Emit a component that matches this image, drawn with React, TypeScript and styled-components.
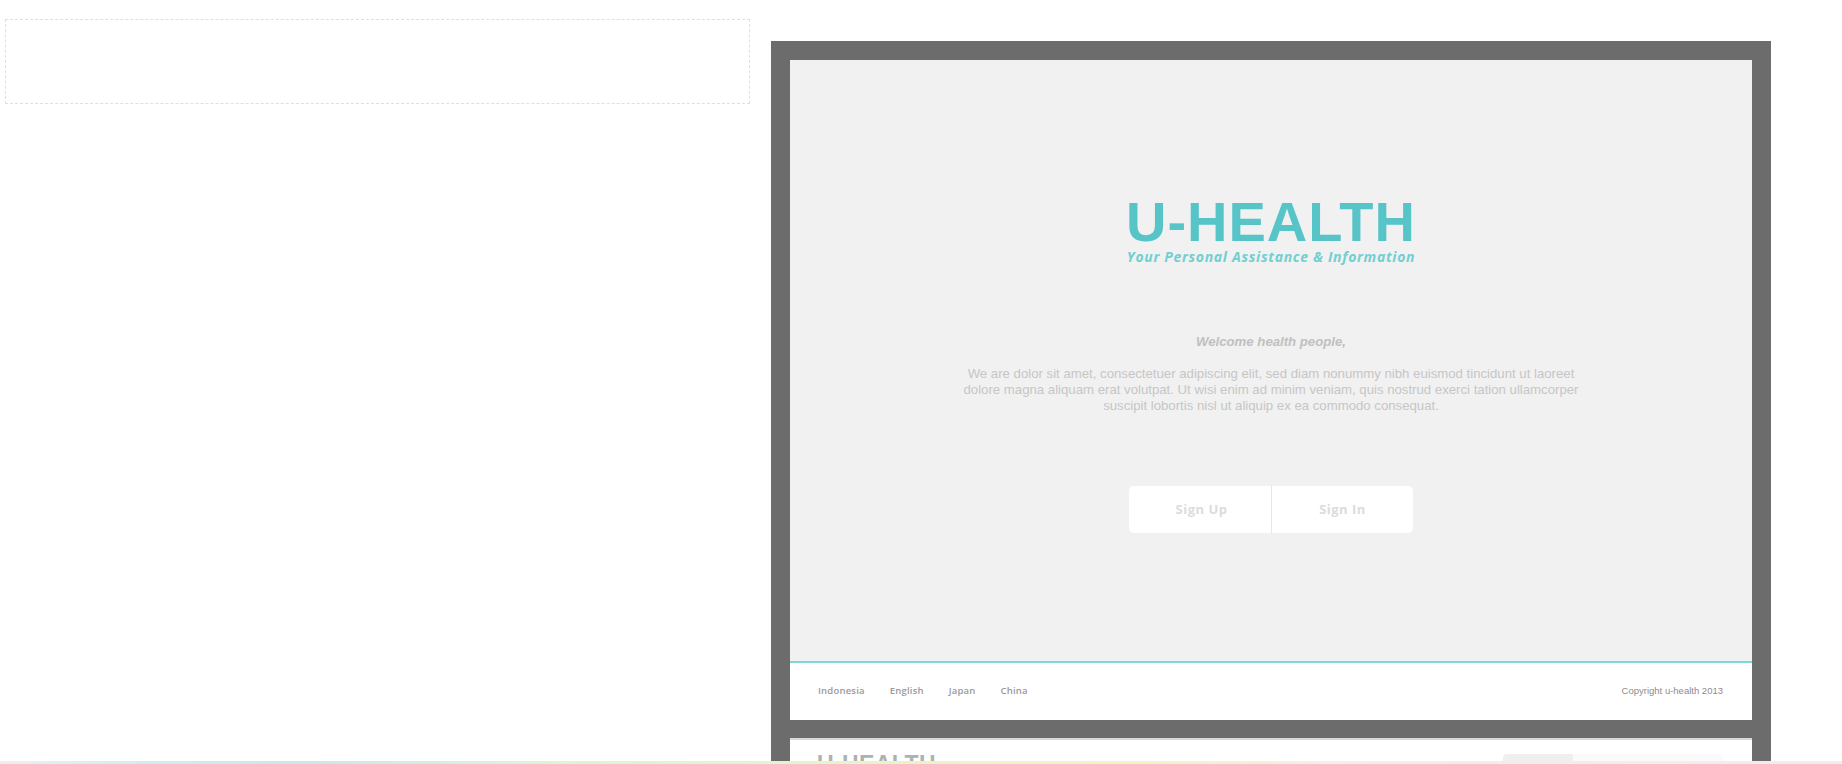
import styled, { createGlobalStyle } from "styled-components";

const Global = createGlobalStyle`
  html, body {
    margin: 0;
    height: 100%;
    background: #fff;
    overflow: hidden;
  }
`;

const Page = styled.div`
  height: 764px;
  display: flex;
  align-items: flex-start;
  padding-left: 5px;
  overflow: hidden;
  position: relative;
  font-family: "Liberation Sans", Arial, sans-serif;
`;

const AdSlot = styled.div`
  flex: 0 0 745px;
  height: 85px;
  margin-top: 19px;
  box-sizing: border-box;
  border: 1px dashed #dde0e0;
`;

const Frame = styled.div`
  flex: 0 0 1000px;
  margin: 41px 0 0 21px;
  box-sizing: border-box;
  padding: 19px 19px 0;
  background: #6c6c6c;
  display: flex;
  flex-direction: column;
  gap: 18px;
`;

const Screen = styled.div`
  background: #fff;
`;

const Hero = styled.div`
  height: 603px;
  box-sizing: border-box;
  padding-top: 136px;
  background: #f1f1f1;
  border-bottom: 2px solid #7fd6d6;
  display: flex;
  flex-direction: column;
  align-items: center;
`;

const Logo = styled.div`
  font-size: 56px;
  font-weight: 700;
  line-height: 52px;
  letter-spacing: 1px;
  color: #57c4c8;
  white-space: nowrap;
`;

const Tagline = styled.div`
  margin-top: 1px;
  font-family: "Open Sans", "Liberation Sans", sans-serif;
  font-size: 14px;
  font-weight: 700;
  font-style: italic;
  line-height: 16px;
  letter-spacing: 0.68px;
  color: #72cfd0;
  white-space: nowrap;
`;

const Welcome = styled.div`
  margin-top: 69px;
  font-size: 13.2px;
  font-weight: 700;
  font-style: italic;
  line-height: 16px;
  color: #c0c0c0;
`;

const Intro = styled.p`
  margin: 16px 0 0;
  width: 632px;
  font-size: 13.2px;
  line-height: 15.8px;
  text-align: center;
  color: #c6c6c6;
`;

const Buttons = styled.div`
  margin-top: 73px;
  width: 284px;
  height: 47px;
  display: flex;
  background: #fff;
  border-radius: 5px;
`;

const AuthButton = styled.div<{ $divided?: boolean }>`
  flex: 0 0 50%;
  box-sizing: border-box;
  display: flex;
  align-items: center;
  justify-content: center;
  padding: 0 0 2px ${(p) => (p.$divided ? "0" : "3px")};
  border-left: ${(p) => (p.$divided ? "1px solid #e6e6e6" : "0")};
  font-family: "Open Sans", "Liberation Sans", sans-serif;
  font-size: 13px;
  font-weight: 700;
  letter-spacing: 0.5px;
  color: #dcdcdc;
`;

const Footer = styled.div`
  height: 57px;
  box-sizing: border-box;
  padding: 0 29px 3px 28px;
  display: flex;
  align-items: center;
  justify-content: space-between;
  background: #fff;
`;

const Languages = styled.nav`
  display: flex;
  gap: 25px;
`;

const Language = styled.span`
  font-family: "Open Sans", "Liberation Sans", sans-serif;
  font-size: 9.5px;
  font-weight: 600;
  letter-spacing: 0.2px;
  color: #9a9a9a;
`;

const Copyright = styled.span`
  font-size: 9.5px;
  color: #8c8c8c;
`;

const NextScreen = styled.div`
  height: 60px;
  box-sizing: border-box;
  padding: 14px 29px 0 27px;
  border-top: 2px solid #d8d8d8;
  background: #fff;
  display: flex;
  justify-content: space-between;
`;

const SmallLogo = styled.div`
  font-size: 23px;
  font-weight: 700;
  line-height: 20px;
  letter-spacing: 0.4px;
  color: #aeb2ae;
`;

const SearchStub = styled.div`
  width: 220px;
  height: 24px;
  border-radius: 4px;
  background: linear-gradient(90deg, #efefef 0 32%, #fafafa 32%);
`;

const ScrollGlow = styled.div`
  position: absolute;
  left: 0;
  right: 0;
  bottom: 0;
  height: 3px;
  background: linear-gradient(
    90deg,
    #eeeeee 0%,
    #cfeeee 8%,
    #c8e8ea 16%,
    #dff3d6 30%,
    #e4f5c8 45%,
    #eef6c4 62%,
    #f0f0e6 72%,
    #eeeeee 100%
  );
`;

export default function App() {
  return (
    <>
      <Global />
      <Page>
        <AdSlot />
        <Frame>
          <Screen>
            <Hero>
              <Logo>U-HEALTH</Logo>
              <Tagline>Your Personal Assistance &amp; Information</Tagline>
              <Welcome>Welcome health people,</Welcome>
              <Intro>
                We are dolor sit amet, consectetuer adipiscing elit, sed diam nonummy nibh euismod
                tincidunt ut laoreet dolore magna aliquam erat volutpat. Ut wisi enim ad minim
                veniam, quis nostrud exerci tation ullamcorper suscipit lobortis nisl ut aliquip ex
                ea commodo consequat.
              </Intro>
              <Buttons>
                <AuthButton>Sign Up</AuthButton>
                <AuthButton $divided>Sign In</AuthButton>
              </Buttons>
            </Hero>
            <Footer>
              <Languages>
                <Language>Indonesia</Language>
                <Language>English</Language>
                <Language>Japan</Language>
                <Language>China</Language>
              </Languages>
              <Copyright>Copyright u-health 2013</Copyright>
            </Footer>
          </Screen>
          <NextScreen>
            <SmallLogo>U-HEALTH</SmallLogo>
            <SearchStub />
          </NextScreen>
        </Frame>
        <ScrollGlow />
      </Page>
    </>
  );
}
